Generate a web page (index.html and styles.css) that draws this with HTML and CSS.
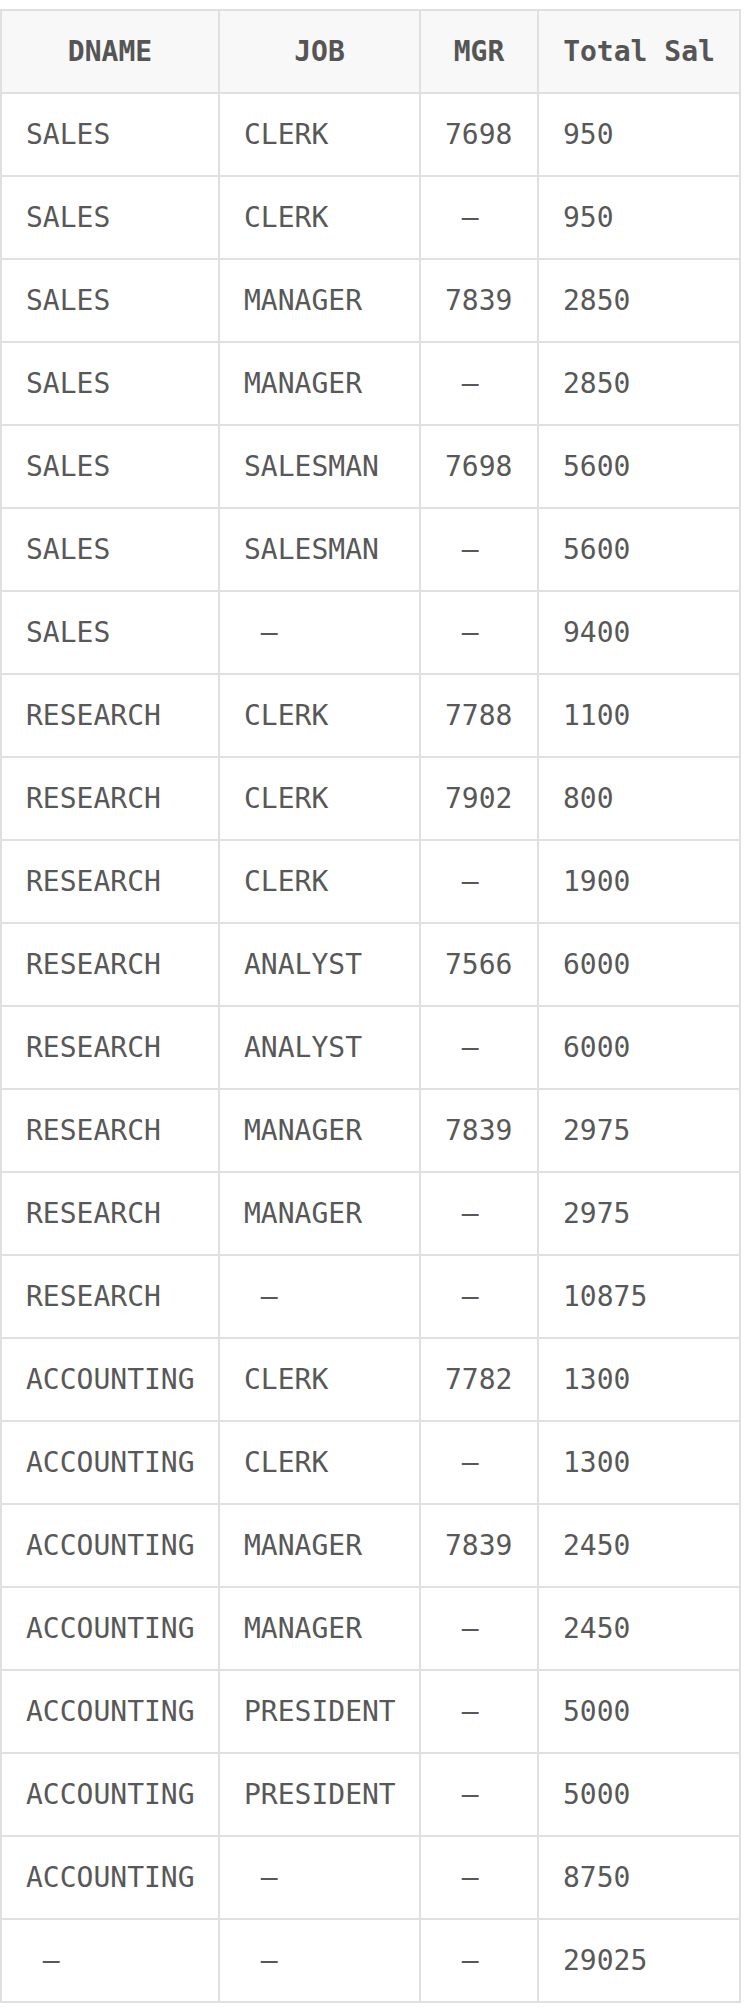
FILE: index.html
```html
<!DOCTYPE html>
<html>
<head>
<meta charset="utf-8">
<link rel="stylesheet" href="styles.css">
</head>
<body>
<table class="grid">
<colgroup><col class="c1"><col class="c2"><col class="c3"><col class="c4"></colgroup>
<thead>
<tr><th>DNAME</th><th>JOB</th><th>MGR</th><th>Total Sal</th></tr>
</thead>
<tbody>
<tr><td>SALES</td><td>CLERK</td><td>7698</td><td>950</td></tr>
<tr><td>SALES</td><td>CLERK</td><td class="nil"> –</td><td>950</td></tr>
<tr><td>SALES</td><td>MANAGER</td><td>7839</td><td>2850</td></tr>
<tr><td>SALES</td><td>MANAGER</td><td class="nil"> –</td><td>2850</td></tr>
<tr><td>SALES</td><td>SALESMAN</td><td>7698</td><td>5600</td></tr>
<tr><td>SALES</td><td>SALESMAN</td><td class="nil"> –</td><td>5600</td></tr>
<tr><td>SALES</td><td class="nil"> –</td><td class="nil"> –</td><td>9400</td></tr>
<tr><td>RESEARCH</td><td>CLERK</td><td>7788</td><td>1100</td></tr>
<tr><td>RESEARCH</td><td>CLERK</td><td>7902</td><td>800</td></tr>
<tr><td>RESEARCH</td><td>CLERK</td><td class="nil"> –</td><td>1900</td></tr>
<tr><td>RESEARCH</td><td>ANALYST</td><td>7566</td><td>6000</td></tr>
<tr><td>RESEARCH</td><td>ANALYST</td><td class="nil"> –</td><td>6000</td></tr>
<tr><td>RESEARCH</td><td>MANAGER</td><td>7839</td><td>2975</td></tr>
<tr><td>RESEARCH</td><td>MANAGER</td><td class="nil"> –</td><td>2975</td></tr>
<tr><td>RESEARCH</td><td class="nil"> –</td><td class="nil"> –</td><td>10875</td></tr>
<tr><td>ACCOUNTING</td><td>CLERK</td><td>7782</td><td>1300</td></tr>
<tr><td>ACCOUNTING</td><td>CLERK</td><td class="nil"> –</td><td>1300</td></tr>
<tr><td>ACCOUNTING</td><td>MANAGER</td><td>7839</td><td>2450</td></tr>
<tr><td>ACCOUNTING</td><td>MANAGER</td><td class="nil"> –</td><td>2450</td></tr>
<tr><td>ACCOUNTING</td><td>PRESIDENT</td><td class="nil"> –</td><td>5000</td></tr>
<tr><td>ACCOUNTING</td><td>PRESIDENT</td><td class="nil"> –</td><td>5000</td></tr>
<tr><td>ACCOUNTING</td><td class="nil"> –</td><td class="nil"> –</td><td>8750</td></tr>
<tr><td class="nil"> –</td><td class="nil"> –</td><td class="nil"> –</td><td>29025</td></tr>
</tbody>
</table>
</body>
</html>
```
FILE: styles.css
```css
html, body {
  margin: 0;
  padding: 0;
  background: #ffffff;
}

body {
  padding-top: 9px;
}

.grid {
  border-collapse: collapse;
  table-layout: fixed;
  width: 739px;
  font-family: "DejaVu Sans Mono", "Liberation Mono", monospace;
  font-size: 28px;
  line-height: 33px;
  color: #585858;
}

.c1 { width: 218px; }
.c2 { width: 201px; }
.c3 { width: 118px; }
.c4 { width: 202px; }

.grid th,
.grid td {
  border: 2px solid #e0e0e0;
  padding: 24px 24px;
  white-space: pre;
  overflow: hidden;
}

.grid th {
  background: #f8f8f8;
  font-weight: bold;
  text-align: center;
  color: #555555;
}

.grid td {
  text-align: left;
  font-weight: normal;
}
```
